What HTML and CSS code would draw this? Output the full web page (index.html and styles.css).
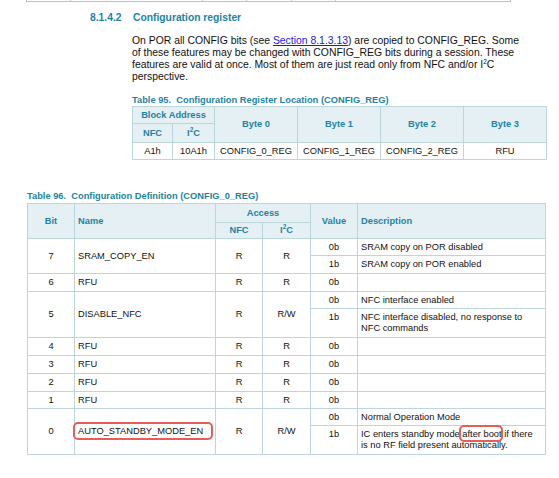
FILE: index.html
```html
<!DOCTYPE html>
<html>
<head>
<meta charset="utf-8">
<link rel="stylesheet" href="styles.css">
</head>
<body>
<div class="page">
  <div class="prev">
    <div class="pc w1"></div><div class="pc w2"></div><div class="pc w3"></div><div class="pc w4"></div><div class="pc w5"></div><div class="pc w6"></div>
  </div>

  <h3 class="sec"><span class="num">8.1.4.2</span><span class="title">Configuration register</span></h3>

  <p class="para">On POR all CONFIG bits (see <a class="lnk" href="#">Section 8.1.3.13</a>) are copied to CONFIG_REG. Some<br>of these features may be changed with CONFIG_REG bits during a session. These<br>features are valid at once. Most of them are just read only from NFC and/or I<sup>2</sup>C<br>perspective.</p>

  <div class="cap cap95">Table 95.&nbsp; Configuration Register Location (CONFIG_REG)</div>
  <table class="t95">
    <colgroup><col class="c40"><col class="c42"><col class="c83"><col class="c83"><col class="c83"><col class="c83"></colgroup>
    <tr class="r17"><th colspan="2">Block Address</th><th rowspan="2">Byte 0</th><th rowspan="2">Byte 1</th><th rowspan="2">Byte 2</th><th rowspan="2">Byte 3</th></tr>
    <tr class="r19"><th>NFC</th><th>I<sup>2</sup>C</th></tr>
    <tr class="r17"><td>A1h</td><td>10A1h</td><td>CONFIG_0_REG</td><td>CONFIG_1_REG</td><td>CONFIG_2_REG</td><td>RFU</td></tr>
  </table>

  <div class="cap cap96">Table 96.&nbsp; Configuration Definition (CONFIG_0_REG)</div>
  <table class="t96">
    <colgroup><col class="c47"><col class="c141"><col class="c47"><col class="c48"><col class="c47"><col class="c188"></colgroup>
    <tr class="r19"><th rowspan="2">Bit</th><th rowspan="2" class="l">Name</th><th colspan="2">Access</th><th rowspan="2">Value</th><th rowspan="2" class="l">Description</th></tr>
    <tr class="r16"><th>NFC</th><th>I<sup>2</sup>C</th></tr>

    <tr class="r17"><td rowspan="2">7</td><td rowspan="2" class="l">SRAM_COPY_EN</td><td rowspan="2">R</td><td rowspan="2">R</td><td>0b</td><td class="d">SRAM copy on POR disabled</td></tr>
    <tr class="r18"><td>1b</td><td class="d">SRAM copy on POR enabled</td></tr>

    <tr class="r18"><td>6</td><td class="l">RFU</td><td>R</td><td>R</td><td>0b</td><td class="d"></td></tr>

    <tr class="r17"><td rowspan="2">5</td><td rowspan="2" class="l">DISABLE_NFC</td><td rowspan="2">R</td><td rowspan="2">R/W</td><td>0b</td><td class="d">NFC interface enabled</td></tr>
    <tr class="r29"><td class="sub">1b</td><td class="d sub">NFC interface disabled, no response to<br>NFC commands</td></tr>

    <tr class="r18"><td>4</td><td class="l">RFU</td><td>R</td><td>R</td><td>0b</td><td class="d"></td></tr>
    <tr class="r18"><td>3</td><td class="l">RFU</td><td>R</td><td>R</td><td>0b</td><td class="d"></td></tr>
    <tr class="r18"><td>2</td><td class="l">RFU</td><td>R</td><td>R</td><td>0b</td><td class="d"></td></tr>
    <tr class="r17"><td>1</td><td class="l">RFU</td><td>R</td><td>R</td><td>0b</td><td class="d"></td></tr>

    <tr class="r17"><td rowspan="2">0</td><td rowspan="2" class="l"><span class="hl hl1">AUTO_STANDBY_MODE_EN</span></td><td rowspan="2">R</td><td rowspan="2">R/W</td><td>0b</td><td class="d">Normal Operation Mode</td></tr>
    <tr class="r29"><td class="sub">1b</td><td class="d sub">IC enters standby mode <span class="hl hl2">after boot</span> if there<br>is no RF field present automatically.</td></tr>
  </table>
</div>
</body>
</html>
```

FILE: styles.css
```css
html, body {
  margin: 0;
  padding: 0;
  background: #ffffff;
}
.page {
  width: 559px;
  height: 478px;
  overflow: hidden;
  font-family: "Liberation Sans", Arial, sans-serif;
  color: #111111;
}
.prev {
  display: flex;
  margin-left: 26px;
  width: 484px;
  height: 1px;
  border-left: 1px solid #a6c8d0;
  border-bottom: 1px solid #a6c8d0;
}
.pc {
  height: 1px;
  border-right: 1px solid #b8d4db;
}
.pc.w1 { width: 43px; }
.pc.w2 { width: 131px; }
.pc.w3 { width: 43px; }
.pc.w4 { width: 44px; }
.pc.w5 { width: 43px; }
.pc.w6 { flex: 1; border-right-color: #a6c8d0; }

.sec {
  margin: 10px 0 0 90px;
  font-size: 10.3px;
  line-height: 12px;
  font-weight: bold;
  color: #1e83a3;
  display: flex;
}
.sec .num { width: 43px; }

.para {
  margin: 11px 0 0 132px;
  font-size: 10.4px;
  line-height: 12.1px;
  color: #111111;
}
.lnk {
  color: #1a1aee;
  text-decoration: underline;
}
sup {
  font-size: 6.5px;
  line-height: 0;
  vertical-align: 4px;
}

.cap {
  font-size: 9.3px;
  line-height: 11px;
  font-weight: bold;
  color: #1e83a3;
}
.cap95 { margin: 12px 0 0 132px; }
.cap96 { margin: 31px 0 0 27px; }

table {
  border-collapse: collapse;
  table-layout: fixed;
  font-size: 9.3px;
  border: 1px solid #a6c8d0;
}
.t95 { margin-left: 132px; width: 414px; }
.t96 { margin: 1px 0 0 27px; width: 518px; }

.c40 { width: 40px; }
.c42 { width: 42px; }
.c83 { width: 83px; }
.c47 { width: 47px; }
.c48 { width: 48px; }
.c141 { width: 141px; }
.c188 { width: 188px; }

th, td {
  border: 1px solid #bcd6dc;
  padding: 0 3px;
  text-align: center;
  vertical-align: middle;
  line-height: 11px;
}
th {
  background: #e4f0f3;
  color: #1e83a3;
  font-weight: bold;
}
td { color: #111111; }
.l { text-align: left; }
.d { text-align: left; white-space: nowrap; }
.sub { vertical-align: top; padding-top: 3px; }

.r16 { height: 16px; }
.r17 { height: 17px; }
.r18 { height: 18px; }
.r19 { height: 19px; }
.r29 { height: 29px; }

.hl { position: relative; }
.hl::after {
  content: "";
  position: absolute;
  border: 2.5px solid #e85c5a;
  border-radius: 5px;
}
.hl1::after { left: -5px; right: -10px; top: -4px; bottom: -4px; }
.hl2::after { left: -3px; right: -1px; top: -4px; bottom: -3px; }
```
